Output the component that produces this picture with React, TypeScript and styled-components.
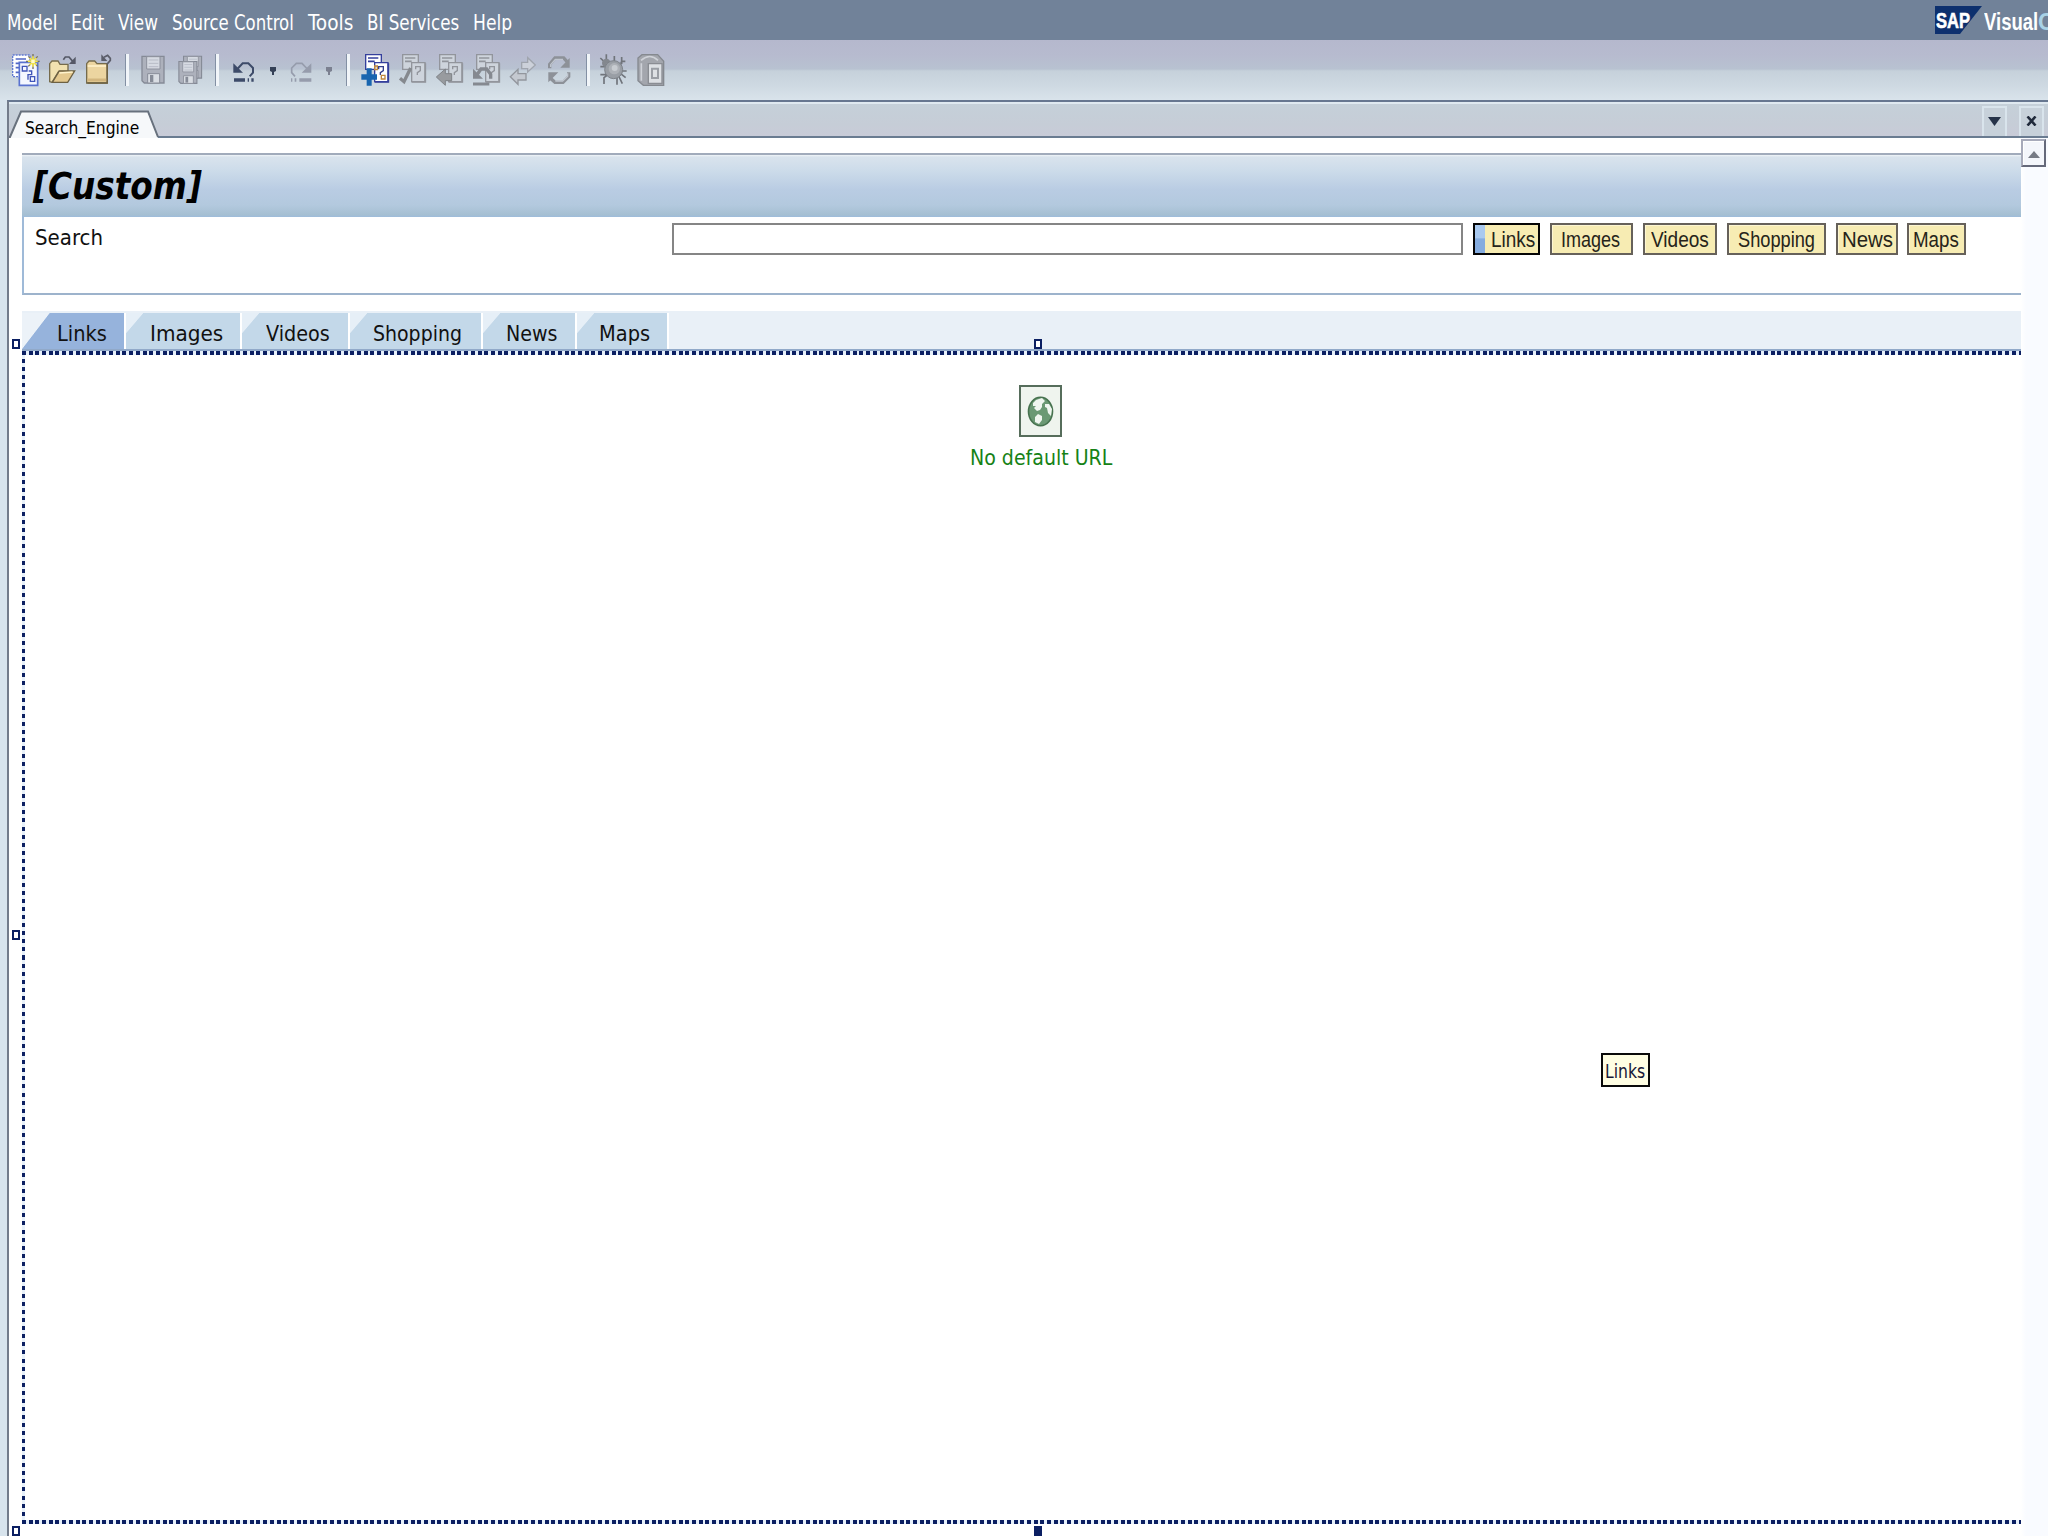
import React, { ReactNode, useLayoutEffect, useRef } from "react";
import styled, { createGlobalStyle, css } from "styled-components";

const ui = `"DejaVu Sans Condensed", "DejaVu Sans", Tahoma, sans-serif`;
const arial = `"Liberation Sans", Arial, sans-serif`;
const navy = "#0b1f62";

const GlobalStyle = createGlobalStyle`
  html, body { margin: 0; padding: 0; background: #fff; overflow: hidden; }
  * { box-sizing: border-box; }
`;

/* ---------- text scaled to a fixed run length ---------- */
const FitBox = styled.span<{ $w: number; $left: number }>`
  display: block;
  flex: none;
  width: ${(p) => p.$w}px;
  margin-left: ${(p) => p.$left}px;
  white-space: nowrap;
`;
const FitInner = styled.span`
  display: inline-block;
  transform-origin: 0 50%;
`;
function Fit({ w, left = 0, children }: { w: number; left?: number; children: ReactNode }) {
  const ref = useRef<HTMLSpanElement>(null);
  useLayoutEffect(() => {
    const el = ref.current;
    if (el) el.style.transform = `scaleX(${w / el.offsetWidth})`;
  }, [w]);
  return (
    <FitBox $w={w} $left={left}>
      <FitInner ref={ref}>{children}</FitInner>
    </FitBox>
  );
}

/* ---------- shell ---------- */
const Window = styled.div`
  width: 2048px;
  height: 1536px;
  overflow: hidden;
  display: flex;
  flex-direction: column;
  font-family: ${ui};
  font-size: 22px;
  color: #111;
  background: #d8e4ed;
`;
const MenuBar = styled.header`
  flex: none;
  height: 40px;
  padding: 4px 0 0 7px;
  display: flex;
  align-items: center;
  justify-content: space-between;
  background: #718299;
  color: #fff;
  line-height: 36px;
  overflow: hidden;
`;
const MenuList = styled.nav`
  display: flex;
  gap: 14px;
  padding-top: 1px;
`;
const Brand = styled.div`
  flex: none;
  width: 113px;
  display: flex;
  align-items: center;
  margin-top: -4px;
`;
const Logo = styled.svg`
  display: block;
  flex: none;
`;
const BrandName = styled.div`
  display: flex;
  flex: none;
  font-family: ${arial};
  font-weight: bold;
  font-size: 23px;
  padding-top: 4px;
`;
const BrandTail = styled.span`
  color: #a9d2e6;
`;
const Toolbar = styled.div`
  flex: none;
  height: 60px;
  display: flex;
  align-items: flex-start;
  padding-top: 12px;
  background: linear-gradient(#b5b8cd 0, #b7bbcf 16px, #b8c2d1 29px, #c6d1db 31px, #cdd8e1 44px, #d9e3eb 60px);
`;
const IconSvg = styled.svg<{ $left: number }>`
  display: block;
  flex: none;
  margin-left: ${(p) => p.$left}px;
`;
const Divider = styled.i<{ $left: number }>`
  flex: none;
  width: 4px;
  height: 32px;
  margin: 2px 0 0 ${(p) => p.$left}px;
  background: linear-gradient(90deg, #8390a4 0 1.5px, #f1f5f9 1.5px);
`;

/* ---------- document frame ---------- */
const Frame = styled.main`
  flex: 1;
  min-height: 0;
  margin-left: 7px;
  border-left: 2px solid #737c8b;
  border-top: 2px solid #677790;
  background: #fff;
  display: flex;
  flex-direction: column;
`;
const DocTabs = styled.div`
  flex: none;
  height: 36px;
  border-top: 2px solid #dfe9f0;
  display: flex;
  justify-content: space-between;
  background: linear-gradient(#c5d0d9, #c6cdd7 60%, #c9cbd8);
  box-shadow: inset 0 -2px #6a7c91;
`;
const DocTab = styled.div`
  width: 150px;
  height: 34px;
  display: grid;
  font-size: 18px;
  line-height: 34px;
  color: #000;
  > * { grid-area: 1 / 1; }
  > span { padding-top: 7px; }
`;
const DocActions = styled.div`
  display: flex;
  gap: 12px;
  padding: 2px 4px 0 0;
`;
const DocAction = styled.button`
  width: 25px;
  height: 30px;
  padding: 0 0 2px;
  border: 2px solid #d9e4ec;
  border-bottom: 0;
  background: #c7d1da;
  display: grid;
  place-items: center;
`;
const DocBody = styled.div`
  flex: 1;
  min-height: 0;
  display: flex;
`;
const Designer = styled.div`
  width: 2012px;
  padding: 15px 0 0 13px;
  display: flex;
  flex-direction: column;
`;
const ScrollRail = styled.aside`
  flex: 1;
  background: linear-gradient(90deg, #fff, #f9fbff 5px);
`;
const ScrollUp = styled.button`
  display: grid;
  place-items: center;
  width: 25px;
  height: 28px;
  padding: 2px 0 0;
  margin-top: 1px;
  border: solid;
  border-width: 2px;
  border-color: #a7aaba #65697a #65697a #a7aaba;
  background: #f4f6fb;
  box-shadow: inset 1px 1px #fff;
`;

/* ---------- search form ---------- */
const Form = styled.section`
  flex: none;
  height: 142px;
  border-left: 2px solid #9fbad8;
  border-bottom: 2px solid #9db3cc;
`;
const FormTitle = styled.h1`
  margin: 0 0 0 -2px;
  height: 64px;
  border-top: 2px solid #a1abbb;
  padding-top: 1px;
  background: linear-gradient(#f0f4f8 0, #d9e3ed 2px, #cddcea 15px, #b9cce3 35px, #b3c9de 50px, #a5bfd2 60px, #9dbcdc 62px);
  color: #000;
  font-size: 37px;
  font-style: italic;
  font-weight: bold;
  line-height: 61px;
`;
const FormRow = styled.div`
  display: flex;
  padding-top: 6px;
  line-height: 30px;
`;
const Input = styled.input`
  width: 791px;
  height: 32px;
  margin: 0 10px 0 569px;
  padding: 0;
  border: 2px solid #858585;
  outline: 0;
  background: #fff;
`;
const Action = styled.button<{ $w: number; $gap: number; $current?: boolean }>`
  flex: none;
  width: ${(p) => p.$w}px;
  height: 32px;
  margin: 0 ${(p) => p.$gap}px 0 0;
  padding: 1px 0 0;
  border: 2px solid #66615a;
  background: #f7ecb3;
  box-shadow: inset 1px 1px #fdf6d2;
  font: 22px/28px ${arial};
  color: #26241a;
  text-align: left;
  ${(p) =>
    p.$current &&
    css`
      border-color: #050505;
      background: linear-gradient(90deg, transparent 10px, #f7ecb3 10px), linear-gradient(#a9c9ef 45%, #85acdf 50%);
      box-shadow: none;
    `}
`;

/* ---------- tab container ---------- */
const Tabs = styled.div`
  flex: none;
  height: 40px;
  margin-top: 16px;
  padding-top: 2px;
  display: flex;
  gap: 2px;
  background: #e9f0f7;
  border-bottom: 2px solid #91a9c9;
`;
const Tab = styled.div<{ $w: number; $active?: boolean }>`
  flex: none;
  width: ${(p) => p.$w}px;
  height: 36px;
  padding-top: 4px;
  line-height: 34px;
  box-shadow: 2px 0 #fff;
  background: ${(p) =>
    p.$active
      ? "linear-gradient(127.5deg, #ecf2f8 21.6px, #96b3dc 22.4px)"
      : "linear-gradient(130.5deg, #e6eff7 12.8px, #c3d8e9 13.6px)"};
`;
const Canvas = styled.section`
  position: relative;
  flex: none;
  height: 1173px;
  display: flex;
  flex-direction: column;
  align-items: center;
  padding-top: 34px;
  background:
    repeating-linear-gradient(90deg, ${navy} 0 4px, #e6f0fa 4px 6.7px) 0 0 / 100% 4px no-repeat,
    repeating-linear-gradient(90deg, ${navy} 0 4px, #e6f0fa 4px 6.7px) 0 100% / 100% 4px no-repeat,
    repeating-linear-gradient(${navy} 0 4px, #e6f0fa 4px 8.06px) 0 0 / 3px 100% no-repeat,
    #fff;
`;
const Handle = styled.i<{ $x: number; $y: number; $solid?: boolean }>`
  position: absolute;
  left: ${(p) => p.$x}px;
  top: ${(p) => p.$y}px;
  width: 8px;
  height: 10px;
  border: 2px solid ${navy};
  background: ${(p) => (p.$solid ? navy : "#fff")};
`;
const UrlIcon = styled.div`
  width: 43px;
  height: 52px;
  margin-left: 37px;
  border: 2px solid #566d5b;
  background: #eff4ee;
  display: grid;
  place-items: center;
`;
const UrlText = styled.div`
  margin: 5px 0 0 38px;
  line-height: 31px;
  color: #168216;
`;
const Tooltip = styled.div`
  position: absolute;
  left: 1579px;
  top: 702px;
  width: 49px;
  height: 34px;
  border: 2px solid #0a0a0a;
  background: #fffee3;
  font-size: 20px;
  line-height: 33px;
  color: #181838;
`;

/* ---------- toolbar drawings, drawn on a grid of three units per pixel ---------- */
function Icon({ left, x, w, children }: { left: number; x: number; w: number; children: ReactNode }) {
  return (
    <IconSvg $left={left} width={w / 3} height={36} viewBox={`${x} 156 ${w} 108`} fill="none">
      {children}
    </IconSvg>
  );
}
const FormGlyph = ({ dx = 0, on = false }: { dx?: number; on?: boolean }) => {
  const line = on ? "#343f9c" : "#92959c";
  const paper = on ? "#fff" : "#ced4dc";
  return (
    <g transform={`translate(${dx} 0)`}>
      <path d="M77 164H124V208H77Z" fill={paper} stroke={line} strokeWidth="4" />
      <path d="M84 174H115M84 184H104" stroke={line} strokeWidth="5" />
      <path d="M104 188H144V245H104Z" fill={paper} stroke={line} strokeWidth="4" />
      <path d="M145 190V246H104" stroke={line} strokeWidth="5" />
      <path d="M116 208V200H130V212L121 218V225" stroke={on ? "#343f8c" : "#92959c"} strokeWidth="4" />
      {on && <path d="M104 198H112V209H104ZM124 226H135V237H124Z" stroke="#c0873c" strokeWidth="4" />}
    </g>
  );
};
const Disk = ({ x, y, s = 1 }: { x: number; y: number; s?: number }) => (
  <g transform={`translate(${x} ${y}) scale(${s})`}>
    <path d="M2 2H68V82H9L2 75Z" fill="#adb1bc" stroke="#858a96" strokeWidth="4" />
    <path d="M16 3H56V40H16Z" fill="#d6dae2" stroke="#8c909c" strokeWidth="3" />
    <path d="M22 13H51M22 23H51M22 33H51" stroke="#b7bbc6" strokeWidth="3" />
    <path d="M19 54H55V82H19Z" fill="#d9dde3" stroke="#888c98" strokeWidth="3" />
    <path d="M26 58H36V79H26Z" fill="#868b97" />
  </g>
);
const Caret = ({ left, color }: { left: number; color: string }) => (
  <IconSvg $left={left} width="8" height="36" viewBox="0 0 8 36">
    <path d="M1 15H7V19L5 20V23H3V20L1 19Z" fill={color} />
  </IconSvg>
);

function ToolbarIcons() {
  return (
    <Toolbar>
      <Icon left={12} x={36} w={84}>
        <path d="M38 165H90V230H38Z" fill="#fff" stroke="#6079d1" strokeWidth="4" strokeDasharray="6 3" />
        <path d="M47 177H78M47 190H60M47 203H60M47 217H58" stroke="#5167c5" strokeWidth="5" />
        <path d="M58 187H113V256H58Z" fill="#f4f7ff" stroke="#5972cf" strokeWidth="5" />
        <path d="M67 199H81V213H67ZM91 230H104V244H91ZM86 213H95V224H84V239" stroke="#4055b9" strokeWidth="4" />
        <path d="M99 162V207M78 184H119M85 169L113 199M113 169L85 199" stroke="#77735c" strokeWidth="4" />
        <path d="M99 169V200M84 184H113M89 174L109 195M109 174L89 195" stroke="#f6e84c" strokeWidth="5" />
        <path d="M94 179H104V189H94Z" fill="#fffbd0" />
      </Icon>
      <Icon left={8} x={144} w={87}>
        <path d="M149 245V191L156 183H174L180 193H204V214H176L156 247Z" fill="#f1e1b0" stroke="#756b4c" strokeWidth="4" />
        <path d="M157 247L178 213H224L203 247Z" fill="#e4c98f" stroke="#6d6142" strokeWidth="4" />
        <path d="M178 219L218 216" stroke="#fff4cd" strokeWidth="4" />
        <path d="M190 179L196 171H207L219 185" stroke="#555866" strokeWidth="5" />
        <path d="M227 170V192H207Z" fill="#555866" />
      </Icon>
      <Icon left={8} x={255} w={84}>
        <path d="M260 191L267 183H284L291 191H321V249H260Z" fill="#ecd5a0" stroke="#756b4c" strokeWidth="4" />
        <path d="M263 198H318" stroke="#fff1c9" strokeWidth="5" />
        <path d="M262 240H319" stroke="#d3b67e" strokeWidth="9" />
        <path d="M262 249H322V192" stroke="#6d6142" strokeWidth="4" />
        <path d="M304 163V183H322Z" fill="#5b5d69" />
        <path d="M312 172L323 166L331 175V181L321 193" stroke="#5b5d69" strokeWidth="5" />
      </Icon>
      <Divider $left={12} />
      <Icon left={12} x={423} w={75}>
        <Disk x={424} y={167} />
      </Icon>
      <Icon left={12} x={534} w={75}>
        <Disk x={549} y={167} s={0.82} />
        <Disk x={535} y={183} s={0.82} />
      </Icon>
      <Divider $left={12} />
      <Icon left={14} x={699} w={66}>
        <path d="M700 190V218H729Z" fill="#3d4b69" />
        <path d="M712 207L728 190H745L759 204V218L749 229" stroke="#3d4b69" strokeWidth="6" />
        <path d="M702 240H735M743 240H747M754 240H761" stroke="#3d4b69" strokeWidth="10" />
      </Icon>
      <Caret left={14} color="#344056" />
      <Icon left={13} x={870} w={66}>
        <path d="M934 190V218H905Z" fill="#969cac" />
        <path d="M922 207L906 190H889L875 204V218L885 229" stroke="#969cac" strokeWidth="5" />
        <path d="M873 240H877M884 240H889M898 240H934" stroke="#969cac" strokeWidth="10" />
      </Icon>
      <Caret left={13} color="#7b8090" />
      <Divider $left={13} />
      <Icon left={11} x={63} w={87}>
        <FormGlyph on />
        <path d="M80 205H95V223H111V239H95V257H80V239H64V223H80Z" fill="#1865af" />
      </Icon>
      <Icon left={8} x={174} w={87}>
        <FormGlyph dx={111} />
        <path d="M180 235L192 245L212 204" stroke="#85898e" strokeWidth="10" />
      </Icon>
      <Icon left={8} x={285} w={87}>
        <FormGlyph dx={222} />
        <path d="M289 231L316 207V221H335V242H316V256Z" fill="#989b9f" stroke="#7e8287" strokeWidth="3" />
      </Icon>
      <Icon left={8} x={396} w={87}>
        <FormGlyph dx={333} />
        <path d="M399 206V236H429Z" fill="#858990" />
        <path d="M411 224L423 207H440L452 223V236" stroke="#858990" strokeWidth="10" />
        <path d="M399 252H448" stroke="#858990" strokeWidth="9" />
      </Icon>
      <Icon left={8} x={507} w={81}>
        <path d="M586 195L563 173V187H545V206H563V216Z" fill="#ccd1da" stroke="#a0a5ae" strokeWidth="4" />
        <path d="M511 230L534 208V221H558V240H534V253Z" fill="#c4c9d0" stroke="#92969d" strokeWidth="4" />
      </Icon>
      <Icon left={11} x={621} w={72}>
        <path d="M629 205V193L645 174H671L681 185" stroke="#8d9198" strokeWidth="10" />
        <path d="M689 174V203H661Z" fill="#8d9198" />
        <path d="M686 217V230L669 247H645L633 236" stroke="#8d9198" strokeWidth="10" />
        <path d="M625 247V217H655Z" fill="#8d9198" />
        <path d="M632 201V194L646 178H669M683 220V229L668 243H646" stroke="#c0c6cf" strokeWidth="4" />
      </Icon>
      <Divider $left={15} />
      <Icon left={9} x={777} w={87}>
        <path
          d="M781 174L803 195M799 163V185L812 197M823 168V190M845 171V190L833 199M856 184H845L837 204M860 213H843M857 233L838 218M847 251L837 230L824 218M831 254V232M792 252V233L809 220M781 224H797L809 213M781 200H800"
          stroke="#70747b"
          strokeWidth="5"
        />
        <ellipse cx="799" cy="189" rx="13" ry="13" fill="#83878e" />
        <ellipse cx="821" cy="209" rx="27" ry="27" fill="#999ea5" stroke="#7d8289" strokeWidth="3" />
        <ellipse cx="823" cy="206" rx="17" ry="17" fill="#adb1b7" />
        <ellipse cx="824" cy="204" rx="9" ry="9" fill="#c8ccd1" />
      </Icon>
      <Icon left={8} x={888} w={87}>
        <path d="M894 174L906 164H953L971 184V256H910L894 242Z" fill="#a3a6ad" stroke="#85898f" strokeWidth="4" />
        <path d="M903 181Q930 158 954 181M904 190V242" stroke="#cfd2d8" strokeWidth="5" />
        <path d="M925 191H966V250H925Z" fill="#dde0e4" stroke="#8a8d93" strokeWidth="4" />
        <path d="M936 206H954V234H936Z" stroke="#9a9ea5" strokeWidth="6" />
      </Icon>
    </Toolbar>
  );
}

const menu: [string, number][] = [
  ["Model", 50], ["Edit", 33], ["View", 40], ["Source Control", 122], ["Tools", 45], ["BI Services", 92], ["Help", 39],
];
const actions = [
  { label: "Links", w: 67, gap: 10, left: 16, text: 44, current: true },
  { label: "Images", w: 83, gap: 10, left: 9, text: 59 },
  { label: "Videos", w: 74, gap: 10, left: 6, text: 58 },
  { label: "Shopping", w: 99, gap: 10, left: 9, text: 77 },
  { label: "News", w: 62, gap: 9, left: 4, text: 51 },
  { label: "Maps", w: 59, gap: 0, left: 4, text: 46 },
];
const tabs = [
  { label: "Links", w: 102, left: 35, text: 50 },
  { label: "Images", w: 114, left: 24, text: 73 },
  { label: "Videos", w: 106, left: 24, text: 64 },
  { label: "Shopping", w: 131, left: 23, text: 89 },
  { label: "News", w: 92, left: 23, text: 52 },
  { label: "Maps", w: 90, left: 22, text: 51 },
];

export default function App() {
  return (
    <Window>
      <GlobalStyle />
      <MenuBar>
        <MenuList>
          {menu.map(([label, w]) => (
            <Fit key={label} w={w}>{label}</Fit>
          ))}
        </MenuList>
        <Brand>
          <Logo width="47" height="28" viewBox="0 0 47 28">
            <path d="M0 0H47L25 28H0Z" fill="#0d306e" />
            <text x="1" y="22" textLength="34" lengthAdjust="spacingAndGlyphs" fill="#fff" stroke="#fff" strokeWidth=".6" fontFamily="Liberation Sans, Arial, sans-serif" fontWeight="bold" fontSize="22">
              SAP
            </text>
          </Logo>
          <BrandName>
            <Fit w={54} left={2}>Visual</Fit>
            <BrandTail>C</BrandTail>
          </BrandName>
        </Brand>
      </MenuBar>
      <ToolbarIcons />
      <Frame>
        <DocTabs>
          <DocTab>
            <svg width="150" height="34" viewBox="0 0 150 34">
              <path d="M1 34L12 8H139L149 34Z" fill="#f6f8fa" />
              <path d="M0 33H1L12 7.5H139L149 33" fill="none" stroke="#68717d" strokeWidth="2" />
            </svg>
            <Fit w={114} left={16}>Search_Engine</Fit>
          </DocTab>
          <DocActions>
            <DocAction aria-label="List documents">
              <svg width="13" height="9" viewBox="0 0 13 9"><path d="M0 0H13L6.5 9Z" fill="#263349" /></svg>
            </DocAction>
            <DocAction aria-label="Close document">
              <svg width="11" height="10" viewBox="0 0 11 10">
                <path d="M1.5 .5L9.5 9.5M9.5 .5L1.5 9.5" stroke="#202a3b" strokeWidth="2.6" />
              </svg>
            </DocAction>
          </DocActions>
        </DocTabs>
        <DocBody>
          <Designer>
            <Form>
              <FormTitle><Fit w={169} left={11}>[Custom]</Fit></FormTitle>
              <FormRow>
                <Fit w={68} left={11}>Search</Fit>
                <Input aria-label="Search" />
                {actions.map((a) => (
                  <Action key={a.label} $w={a.w} $gap={a.gap} $current={a.current}>
                    <Fit w={a.text} left={a.left}>{a.label}</Fit>
                  </Action>
                ))}
              </FormRow>
            </Form>
            <Tabs>
              {tabs.map((t, i) => (
                <Tab key={t.label} $w={t.w} $active={i === 0}>
                  <Fit w={t.text} left={t.left}>{t.label}</Fit>
                </Tab>
              ))}
            </Tabs>
            <Canvas>
              <UrlIcon>
                <svg width="27" height="31" viewBox="0 0 27 31">
                  <ellipse cx="13.5" cy="15.5" rx="12" ry="14.2" fill="#6b9974" stroke="#47724f" strokeWidth="1.6" />
                  <path d="M9 4L15 2L18 5L15 8V11L13 14L10 15L7 12L9 10H6L6 7ZM18 8L22 8L25 13L24 20L21 17L20 12L18 11ZM11 18L15 20L15 24L12 28L8 26L8 21Z" fill="#f0f6f0" />
                </svg>
              </UrlIcon>
              <UrlText><Fit w={142}>No default URL</Fit></UrlText>
              <Handle $x={-10} $y={-12} />
              <Handle $x={1012} $y={-12} />
              <Handle $x={-10} $y={579} />
              <Handle $x={-10} $y={1175} />
              <Handle $x={1012} $y={1175} $solid />
              <Tooltip><Fit w={40} left={2}>Links</Fit></Tooltip>
            </Canvas>
          </Designer>
          <ScrollRail>
            <ScrollUp aria-label="Scroll up">
              <svg width="12" height="7" viewBox="0 0 12 7"><path d="M6 0L12 7H0Z" fill="#777b85" /></svg>
            </ScrollUp>
          </ScrollRail>
        </DocBody>
      </Frame>
    </Window>
  );
}
